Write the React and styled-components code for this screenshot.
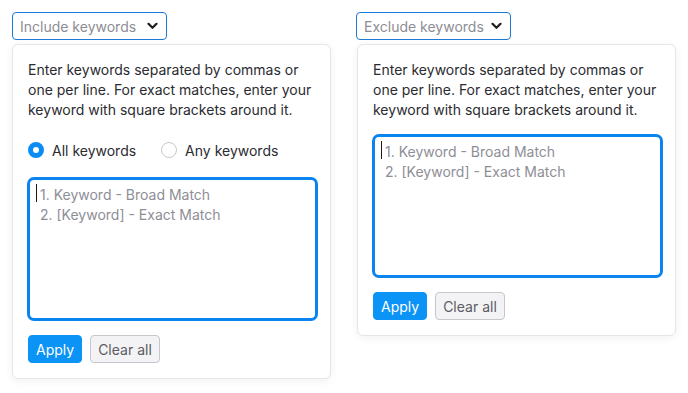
import React from "react";
import styled, { createGlobalStyle } from "styled-components";

const GlobalStyle = createGlobalStyle`
  body {
    margin: 0;
    background: #ffffff;
    font-family: Inter, "Noto Sans", sans-serif;
  }
`;

const PageUI = styled.div`
  display: flex;
  align-items: flex-start;
  gap: 24px;
  padding: 12px;
`;

const ColumnUI = styled.div`
  width: 320px;
  display: flex;
  flex-direction: column;
  gap: 4px;
`;

const TriggerUI = styled.button`
  width: 155px;
  height: 28px;
  box-sizing: border-box;
  display: flex;
  align-items: center;
  justify-content: space-between;
  padding: 0 8px 0 7px;
  background: #ffffff;
  border: 1px solid #1a7ad6;
  border-radius: 4px;
  font-family: Inter, sans-serif;
  font-size: 14px;
  color: #8d8d94;
  cursor: pointer;
`;

const PanelUI = styled.div`
  width: 319px;
  box-sizing: border-box;
  margin-left: ${(p) => p.$shift || 0}px;
  padding: 15px 14px 15px 15px;
  background: #ffffff;
  border: 1px solid #e6e6e8;
  border-radius: 6px;
  box-shadow: 0 2px 8px rgba(0, 0, 0, 0.06);
  display: flex;
  flex-direction: column;
`;

const HintUI = styled.p`
  margin: 0;
  font-size: 14px;
  line-height: 20px;
  color: #2b2b30;
`;

const RadioRowUI = styled.div`
  display: flex;
  align-items: center;
  gap: 25px;
  margin-top: 20px;
  height: 20px;
`;

const RadioUI = styled.label`
  display: flex;
  align-items: center;
  gap: 8px;
  font-size: 14px;
  color: #2b2b30;
  cursor: pointer;
`;

const DotUI = styled.span`
  width: 16px;
  height: 16px;
  box-sizing: border-box;
  border-radius: 50%;
  border: ${(p) => (p.$on ? "5px solid #0a8cf5" : "1px solid #c9c9ce")};
  background: #ffffff;
`;

const FieldWrapUI = styled.div`
  position: relative;
  margin-top: ${(p) => p.$top}px;
  margin-left: -1px;
`;

const TextAreaUI = styled.textarea`
  display: block;
  width: 291px;
  height: 144px;
  box-sizing: border-box;
  padding: 5px 10px;
  border: 3px solid #0a84ee;
  border-radius: 7px;
  resize: none;
  outline: none;
  font-family: Inter, sans-serif;
  font-size: 14px;
  line-height: 20px;
  color: #2b2b30;

  &::placeholder {
    color: #8e8e96;
  }
`;

const CaretUI = styled.span`
  position: absolute;
  left: 9px;
  top: 7px;
  width: 1px;
  height: 18px;
  background: #1a1a1a;
`;

const ActionsUI = styled.div`
  display: flex;
  gap: 8px;
  margin-top: 14px;
`;

const ButtonUI = styled.button`
  height: 28px;
  box-sizing: border-box;
  padding: 0 7px;
  border-radius: 4px;
  border: 1px solid ${(p) => (p.$primary ? "#0b93f6" : "#c6c6cc")};
  background: ${(p) => (p.$primary ? "#0b93f6" : "#f3f3f5")};
  color: ${(p) => (p.$primary ? "#ffffff" : "#5c5c63")};
  font-family: Inter, sans-serif;
  font-size: 14px;
  cursor: pointer;
`;

const Chevron = () => (
  <svg width="11" height="8" viewBox="0 0 11 8" fill="none">
    <path d="M1.5 1.8 L5.5 5.8 L9.5 1.8" stroke="#1c1c20" strokeWidth="2.2" strokeLinecap="round" strokeLinejoin="round" />
  </svg>
);

const placeholder = "1. Keyword - Broad Match\n2. [Keyword] - Exact Match";

const KeywordFilter = ({ title, withMode }) => (
  <ColumnUI>
    <TriggerUI>
      <span>{title}</span>
      <Chevron />
    </TriggerUI>
    <PanelUI $shift={withMode ? 0 : 1}>
      <HintUI>
        Enter keywords separated by commas or one per line. For exact matches, enter your
        keyword with square brackets around it.
      </HintUI>
      {withMode && (
        <RadioRowUI>
          <RadioUI>
            <DotUI $on />
            All keywords
          </RadioUI>
          <RadioUI>
            <DotUI />
            Any keywords
          </RadioUI>
        </RadioRowUI>
      )}
      <FieldWrapUI $top={withMode ? 17 : 14}>
        <TextAreaUI placeholder={placeholder} />
        <CaretUI />
      </FieldWrapUI>
      <ActionsUI>
        <ButtonUI $primary>Apply</ButtonUI>
        <ButtonUI>Clear all</ButtonUI>
      </ActionsUI>
    </PanelUI>
  </ColumnUI>
);

export default function App() {
  return (
    <>
      <GlobalStyle />
      <PageUI>
        <KeywordFilter title="Include keywords" withMode />
        <KeywordFilter title="Exclude keywords" />
      </PageUI>
    </>
  );
}
